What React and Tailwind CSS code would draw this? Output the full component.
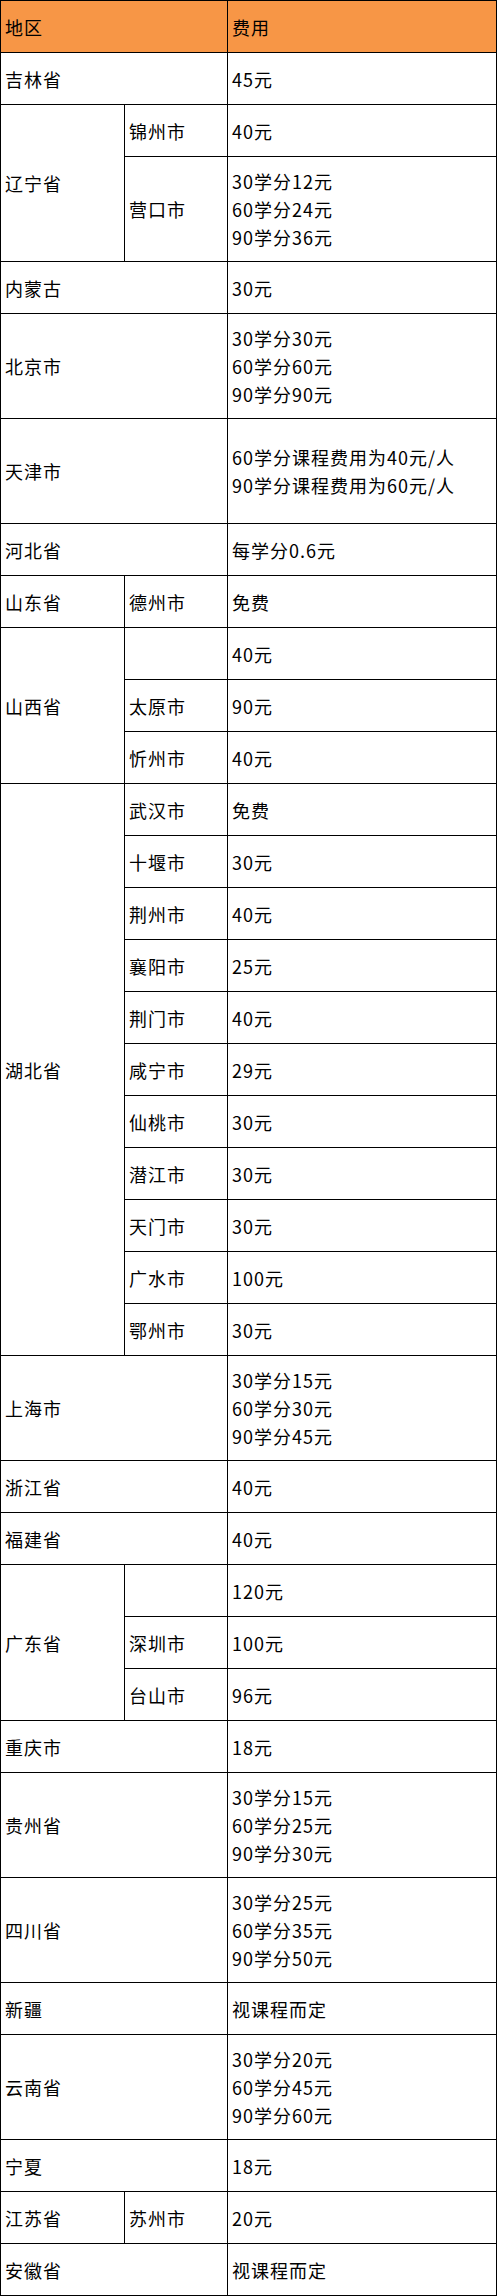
const rows = [
  { cells: [{ text: "吉林省", colSpan: 2 }, { text: "45元" }] },
  { cells: [{ text: "辽宁省", rowSpan: 2 }, { text: "锦州市" }, { text: "40元" }] },
  { tall: true, cells: [{ text: "营口市" }, { lines: ["30学分12元", "60学分24元", "90学分36元"] }] },
  { cells: [{ text: "内蒙古", colSpan: 2 }, { text: "30元" }] },
  { tall: true, cells: [{ text: "北京市", colSpan: 2 }, { lines: ["30学分30元", "60学分60元", "90学分90元"] }] },
  { tall: true, cells: [{ text: "天津市", colSpan: 2 }, { lines: ["60学分课程费用为40元/人", "90学分课程费用为60元/人"] }] },
  { cells: [{ text: "河北省", colSpan: 2 }, { text: "每学分0.6元" }] },
  { cells: [{ text: "山东省" }, { text: "德州市" }, { text: "免费" }] },
  { cells: [{ text: "山西省", rowSpan: 3 }, { text: "" }, { text: "40元" }] },
  { cells: [{ text: "太原市" }, { text: "90元" }] },
  { cells: [{ text: "忻州市" }, { text: "40元" }] },
  { cells: [{ text: "湖北省", rowSpan: 11 }, { text: "武汉市" }, { text: "免费" }] },
  { cells: [{ text: "十堰市" }, { text: "30元" }] },
  { cells: [{ text: "荆州市" }, { text: "40元" }] },
  { cells: [{ text: "襄阳市" }, { text: "25元" }] },
  { cells: [{ text: "荆门市" }, { text: "40元" }] },
  { cells: [{ text: "咸宁市" }, { text: "29元" }] },
  { cells: [{ text: "仙桃市" }, { text: "30元" }] },
  { cells: [{ text: "潜江市" }, { text: "30元" }] },
  { cells: [{ text: "天门市" }, { text: "30元" }] },
  { cells: [{ text: "广水市" }, { text: "100元" }] },
  { cells: [{ text: "鄂州市" }, { text: "30元" }] },
  { tall: true, cells: [{ text: "上海市", colSpan: 2 }, { lines: ["30学分15元", "60学分30元", "90学分45元"] }] },
  { cells: [{ text: "浙江省", colSpan: 2 }, { text: "40元" }] },
  { cells: [{ text: "福建省", colSpan: 2 }, { text: "40元" }] },
  { cells: [{ text: "广东省", rowSpan: 3 }, { text: "" }, { text: "120元" }] },
  { cells: [{ text: "深圳市" }, { text: "100元" }] },
  { cells: [{ text: "台山市" }, { text: "96元" }] },
  { cells: [{ text: "重庆市", colSpan: 2 }, { text: "18元" }] },
  { tall: true, cells: [{ text: "贵州省", colSpan: 2 }, { lines: ["30学分15元", "60学分25元", "90学分30元"] }] },
  { tall: true, cells: [{ text: "四川省", colSpan: 2 }, { lines: ["30学分25元", "60学分35元", "90学分50元"] }] },
  { cells: [{ text: "新疆", colSpan: 2 }, { text: "视课程而定" }] },
  { tall: true, cells: [{ text: "云南省", colSpan: 2 }, { lines: ["30学分20元", "60学分45元", "90学分60元"] }] },
  { cells: [{ text: "宁夏", colSpan: 2 }, { text: "18元" }] },
  { cells: [{ text: "江苏省" }, { text: "苏州市" }, { text: "20元" }] },
  { cells: [{ text: "安徽省", colSpan: 2 }, { text: "视课程而定" }] },
];

export default function App() {
  return (
    <div
      className="w-[497px] bg-white text-black text-[18px] leading-[28px] tracking-[1px]"
      style={{ fontFamily: '"Noto Sans CJK SC", "Noto Sans", sans-serif' }}
    >
      <table className="w-[497px] table-fixed border-collapse">
        <colgroup>
          <col className="w-[124px]" />
          <col className="w-[103px]" />
          <col />
        </colgroup>
        <thead>
          <tr className="h-[52px] bg-[#f79646]">
            <th colSpan={2} className="border border-black px-1 text-left font-normal align-middle">
              地区
            </th>
            <th className="border border-black px-1 text-left font-normal align-middle">费用</th>
          </tr>
        </thead>
        <tbody>
          {rows.map((row, i) => (
            <tr key={i} className={row.tall ? "h-[105px]" : "h-[52px]"}>
              {row.cells.map((cell, j) => (
                <td
                  key={j}
                  colSpan={cell.colSpan}
                  rowSpan={cell.rowSpan}
                  className="border border-black px-1 py-0 align-middle"
                >
                  {cell.lines
                    ? cell.lines.map((line) => <div key={line}>{line}</div>)
                    : cell.text}
                </td>
              ))}
            </tr>
          ))}
        </tbody>
      </table>
    </div>
  );
}
